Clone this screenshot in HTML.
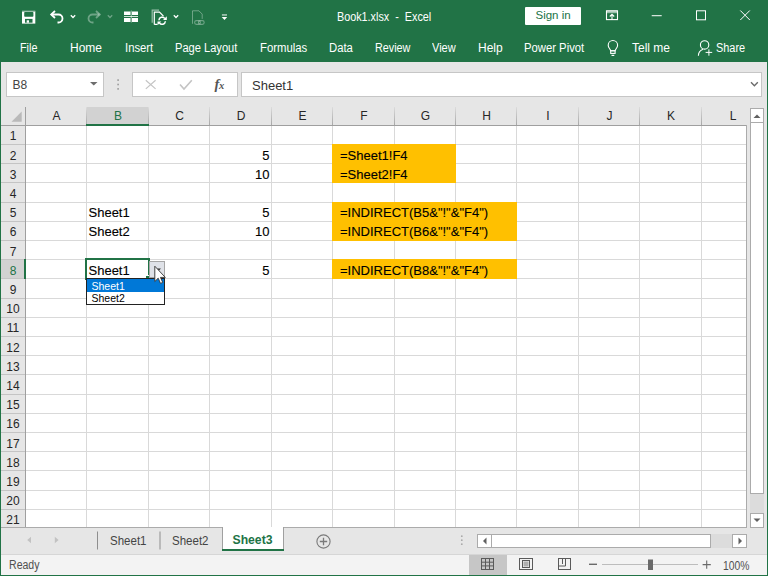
<!DOCTYPE html>
<html><head><meta charset="utf-8">
<style>
*{margin:0;padding:0;box-sizing:border-box}
html,body{width:768px;height:576px;overflow:hidden;background:#e6e6e6;font-family:"Liberation Sans",sans-serif}
body{position:relative}
.a{position:absolute}
.t{position:absolute;white-space:nowrap;line-height:1}
.w{color:#fff;font-size:12px}
svg{position:absolute;overflow:visible}
</style></head><body>
<!-- title/ribbon green -->
<div class="a" style="left:0;top:0;width:768px;height:62px;background:#217346"></div>

<!-- QAT icons -->
<svg style="left:0;top:0" width="240" height="32" viewBox="0 0 240 32">
  <!-- save -->
  <rect x="22" y="10.8" width="13.3" height="12.8" fill="#fff"/>
  <rect x="22" y="10.8" width="13.3" height="1.2" fill="#217346" fill-opacity=".45"/>
  <rect x="24.2" y="12" width="9.2" height="4.75" rx=".8" fill="#217346"/>
  <rect x="25" y="18.9" width="7.5" height="3.8" fill="#217346"/>
  <rect x="26.7" y="20.3" width="2.3" height="2.4" fill="#fff"/>
  <!-- undo -->
  <path d="M51.5 14.5h7a4 4 0 0 1 0 8h-1" fill="none" stroke="#fff" stroke-width="1.8"/>
  <path d="M55 11l-3.8 3.5 3.8 3.5" fill="none" stroke="#fff" stroke-width="1.8"/>
  <path d="M70.8 15.3l2.2 2.2 2.2-2.2" fill="none" stroke="#fff" stroke-width="1.3"/>
  <!-- redo dim -->
  <path d="M99.5 14.5h-7a4 4 0 0 0 0 8h1" fill="none" stroke="#fff" stroke-opacity=".35" stroke-width="1.8"/>
  <path d="M96 11l3.8 3.5-3.8 3.5" fill="none" stroke="#fff" stroke-opacity=".35" stroke-width="1.8"/>
  <path d="M107.8 15.3l2.2 2.2 2.2-2.2" fill="none" stroke="#fff" stroke-opacity=".35" stroke-width="1.3"/>
  <!-- grid -->
  <rect x="124" y="11.5" width="6.5" height="3.5" fill="#fff"/>
  <rect x="132" y="11.5" width="6" height="3.5" fill="#fff"/>
  <rect x="124" y="18" width="6.5" height="4" fill="#fff"/>
  <rect x="132" y="18" width="6" height="4" fill="#fff"/>
  <rect x="124" y="16" width="14" height="1" fill="#fff" fill-opacity=".8"/>
  <rect x="130.8" y="10.5" width="1" height="12" fill="#fff" fill-opacity=".5"/>
  <!-- doc refresh -->
  <path d="M152.2 22.8V10.1h6.8" fill="none" stroke="#fff" stroke-opacity=".55" stroke-width="1.2"/>
  <path d="M154.3 24.4V12.2h5.2l3.6 3.6v.8M154.3 24.4h3" fill="none" stroke="#fff" stroke-width="1.2"/>
  <path d="M158.9 20.3a3.4 3.4 0 0 1 6-1.9" fill="none" stroke="#fff" stroke-width="1.5"/>
  <path d="M165.4 21.2a3.4 3.4 0 0 1-6 1.9" fill="none" stroke="#fff" stroke-width="1.5"/>
  <path d="M166.8 16.2v3.8h-3.8z" fill="#fff"/>
  <path d="M157.5 25.3v-3.8h3.8z" fill="#fff"/>
  <path d="M173.8 15.3l2.2 2.2 2.2-2.2" fill="none" stroke="#fff" stroke-width="1.3"/>
  <!-- dim doc link -->
  <path d="M192.5 23.8V10.8h6.4l3.3 3.3v4.8" fill="none" stroke="#fff" stroke-opacity=".35" stroke-width="1"/>
  <rect x="194.6" y="20.6" width="5.8" height="3.8" rx="1.9" fill="none" stroke="#fff" stroke-opacity=".35" stroke-width="1.1"/>
  <rect x="198.4" y="20.6" width="5.8" height="3.8" rx="1.9" fill="none" stroke="#fff" stroke-opacity=".35" stroke-width="1.1"/>
  <!-- customize -->
  <rect x="221.9" y="14.3" width="5.1" height="1.3" fill="#fff" fill-opacity=".75"/>
  <path d="M221.7 17h5.5l-2.75 3.1z" fill="#fff"/>
</svg>

<div class="t w" style="left:337px;top:11px;transform:scaleX(0.9);transform-origin:0 0">Book1.xlsx&nbsp; -&nbsp; Excel</div>

<!-- sign in -->
<div class="a" style="left:525px;top:7px;width:56px;height:18px;background:#fff;border-radius:1px"></div>
<div class="t" style="left:535.5px;top:10px;font-size:11.5px;color:#217346">Sign in</div>

<!-- window controls -->
<svg style="left:0;top:0" width="768" height="32" viewBox="0 0 768 32">
  <rect x="606.5" y="10.8" width="11" height="8.8" fill="none" stroke="#fff" stroke-width="1.1"/>
  <rect x="606.5" y="10.8" width="11" height="2.4" fill="#fff" fill-opacity=".55"/>
  <path d="M612 19.5v-5M609.8 16.5l2.2-2.3 2.2 2.3" fill="none" stroke="#fff" stroke-width="1.1"/>
  <rect x="651.7" y="15.2" width="10" height="1" fill="#fff"/>
  <rect x="696.5" y="10.8" width="9" height="9" fill="none" stroke="#fff" stroke-width="1"/>
  <path d="M740.3 10.5l9.5 9.5M749.8 10.5l-9.5 9.5" stroke="#fff" stroke-width="1"/>
</svg>

<!-- ribbon tabs -->
<div class="t w" style="left:20px;top:42px;transform:scaleX(0.9);transform-origin:0 0">File</div>
<div class="t w" style="left:70px;top:42px">Home</div>
<div class="t w" style="left:124.5px;top:42px;transform:scaleX(0.94);transform-origin:0 0">Insert</div>
<div class="t w" style="left:175px;top:42px;transform:scaleX(0.925);transform-origin:0 0">Page Layout</div>
<div class="t w" style="left:260px;top:42px;transform:scaleX(0.945);transform-origin:0 0">Formulas</div>
<div class="t w" style="left:329px;top:42px;transform:scaleX(0.94);transform-origin:0 0">Data</div>
<div class="t w" style="left:375px;top:42px;transform:scaleX(0.9);transform-origin:0 0">Review</div>
<div class="t w" style="left:431.5px;top:42px;transform:scaleX(0.92);transform-origin:0 0">View</div>
<div class="t w" style="left:478px;top:42px">Help</div>
<div class="t w" style="left:524px;top:42px;transform:scaleX(0.94);transform-origin:0 0">Power Pivot</div>
<div class="t w" style="left:632px;top:42px">Tell me</div>
<div class="t w" style="left:716px;top:42px;transform:scaleX(0.91);transform-origin:0 0">Share</div>
<svg style="left:0;top:32px" width="768" height="30" viewBox="0 32 768 30">
  <path d="M610.7 50.8C610.2 48.6 608.2 47.8 608.2 45.2A4.7 4.7 0 0 1 617.6 45.2C617.6 47.8 615.6 48.6 615.1 50.8Z" fill="none" stroke="#fff" stroke-width="1.1"/>
  <rect x="610.7" y="50.8" width="4.4" height="2.6" fill="none" stroke="#fff" stroke-width="1.1"/>
  <path d="M611.5 55.4h2.8" stroke="#fff" stroke-width="1.2"/>
  <circle cx="704.6" cy="44.9" r="4.2" fill="none" stroke="#fff" stroke-width="1.1"/>
  <path d="M698.4 55.8a7 7 0 0 1 4.6-6.6" fill="none" stroke="#fff" stroke-width="1.1"/>
  <path d="M708.9 49.3v6.4M705.6 52.4h6.6" stroke="#fff" stroke-width="1"/>
</svg>

<!-- formula bar -->
<div class="a" style="left:6px;top:72px;width:98px;height:25px;background:#fff;border:1px solid #c6c6c6"></div>
<div class="t" style="left:12.5px;top:79px;font-size:12px;color:#444">B8</div>
<div class="a" style="left:132px;top:72px;width:106px;height:25px;background:#fff;border:1px solid #c6c6c6"></div>
<svg style="left:0;top:62px" width="768" height="45" viewBox="0 62 768 45">
  <path d="M90 82h7.5l-3.75 3.6z" fill="#6d6d6d"/>
  <rect x="117.3" y="79.3" width="1.6" height="1.6" fill="#9a9a9a"/>
  <rect x="117.3" y="83.7" width="1.6" height="1.6" fill="#9a9a9a"/>
  <rect x="117.3" y="88.1" width="1.6" height="1.6" fill="#9a9a9a"/>
  <path d="M145.8 80.3l9.8 8.6M155.6 80.3l-9.8 8.6" stroke="#c4c4c4" stroke-width="1.2"/>
  <path d="M180 84.5l4 4.5 7.8-8.8" fill="none" stroke="#c4c4c4" stroke-width="1.6"/>
</svg>
<div class="t" style="left:214.5px;top:76.5px;font-family:'Liberation Serif',serif;font-style:italic;font-weight:bold;font-size:14.5px;color:#555">f<span style="font-size:10.5px;position:relative;left:-.3px">x</span></div>
<div class="a" style="left:241px;top:72px;width:521px;height:25px;background:#fff;border:1px solid #c6c6c6"></div>
<div class="t" style="left:252px;top:78.5px;font-size:13px;color:#333">Sheet1</div>
<svg style="left:0;top:62px" width="768" height="45" viewBox="0 62 768 45">
  <path d="M751 82.3l3.4 3.4 3.4-3.4" fill="none" stroke="#6a6a6a" stroke-width="1.4"/>
</svg>
<!-- headers -->
<div class="a" style="left:1px;top:107px;width:745px;height:18px;background:#e6e6e6"></div>
<svg style="left:0;top:100px" width="30" height="30" viewBox="0 100 30 30"><path d="M21.7 111.5v10.2h-10.2z" fill="#b9b9b9"/></svg>
<div class="a" style="left:87px;top:107px;width:61px;height:17px;background:#d2d2d2"></div>
<div class="a" style="left:86px;top:124px;width:63px;height:2px;background:#217346"></div>
<div class="a" style="left:1px;top:125px;width:24px;height:403px;background:#e6e6e6"></div>
<div class="a" style="left:1px;top:260px;width:23px;height:18px;background:#d2d2d2"></div>
<div class="a" style="left:26px;top:126px;width:720px;height:401px;background:#fff"></div>
<div class="a" style="left:86px;top:126px;width:1px;height:401px;background:#d9d9d9"></div>
<div class="a" style="left:86px;top:107px;width:1px;height:18px;background:linear-gradient(#dcdcdc,#c6c6c6 40%,#a8a8a8)"></div>
<div class="a" style="left:148px;top:126px;width:1px;height:401px;background:#d9d9d9"></div>
<div class="a" style="left:148px;top:107px;width:1px;height:18px;background:linear-gradient(#dcdcdc,#c6c6c6 40%,#a8a8a8)"></div>
<div class="a" style="left:209px;top:126px;width:1px;height:401px;background:#d9d9d9"></div>
<div class="a" style="left:209px;top:107px;width:1px;height:18px;background:linear-gradient(#dcdcdc,#c6c6c6 40%,#a8a8a8)"></div>
<div class="a" style="left:271px;top:126px;width:1px;height:401px;background:#d9d9d9"></div>
<div class="a" style="left:271px;top:107px;width:1px;height:18px;background:linear-gradient(#dcdcdc,#c6c6c6 40%,#a8a8a8)"></div>
<div class="a" style="left:332px;top:126px;width:1px;height:401px;background:#d9d9d9"></div>
<div class="a" style="left:332px;top:107px;width:1px;height:18px;background:linear-gradient(#dcdcdc,#c6c6c6 40%,#a8a8a8)"></div>
<div class="a" style="left:394px;top:126px;width:1px;height:401px;background:#d9d9d9"></div>
<div class="a" style="left:394px;top:107px;width:1px;height:18px;background:linear-gradient(#dcdcdc,#c6c6c6 40%,#a8a8a8)"></div>
<div class="a" style="left:455px;top:126px;width:1px;height:401px;background:#d9d9d9"></div>
<div class="a" style="left:455px;top:107px;width:1px;height:18px;background:linear-gradient(#dcdcdc,#c6c6c6 40%,#a8a8a8)"></div>
<div class="a" style="left:516px;top:126px;width:1px;height:401px;background:#d9d9d9"></div>
<div class="a" style="left:516px;top:107px;width:1px;height:18px;background:linear-gradient(#dcdcdc,#c6c6c6 40%,#a8a8a8)"></div>
<div class="a" style="left:578px;top:126px;width:1px;height:401px;background:#d9d9d9"></div>
<div class="a" style="left:578px;top:107px;width:1px;height:18px;background:linear-gradient(#dcdcdc,#c6c6c6 40%,#a8a8a8)"></div>
<div class="a" style="left:639px;top:126px;width:1px;height:401px;background:#d9d9d9"></div>
<div class="a" style="left:639px;top:107px;width:1px;height:18px;background:linear-gradient(#dcdcdc,#c6c6c6 40%,#a8a8a8)"></div>
<div class="a" style="left:701px;top:126px;width:1px;height:401px;background:#d9d9d9"></div>
<div class="a" style="left:701px;top:107px;width:1px;height:18px;background:linear-gradient(#dcdcdc,#c6c6c6 40%,#a8a8a8)"></div>
<div class="a" style="left:26px;top:144px;width:720px;height:1px;background:#d9d9d9"></div>
<div class="a" style="left:1px;top:144px;width:24px;height:1px;background:#c4c4c4"></div>
<div class="a" style="left:26px;top:163px;width:720px;height:1px;background:#d9d9d9"></div>
<div class="a" style="left:1px;top:163px;width:24px;height:1px;background:#c4c4c4"></div>
<div class="a" style="left:26px;top:182px;width:720px;height:1px;background:#d9d9d9"></div>
<div class="a" style="left:1px;top:182px;width:24px;height:1px;background:#c4c4c4"></div>
<div class="a" style="left:26px;top:202px;width:720px;height:1px;background:#d9d9d9"></div>
<div class="a" style="left:1px;top:202px;width:24px;height:1px;background:#c4c4c4"></div>
<div class="a" style="left:26px;top:221px;width:720px;height:1px;background:#d9d9d9"></div>
<div class="a" style="left:1px;top:221px;width:24px;height:1px;background:#c4c4c4"></div>
<div class="a" style="left:26px;top:240px;width:720px;height:1px;background:#d9d9d9"></div>
<div class="a" style="left:1px;top:240px;width:24px;height:1px;background:#c4c4c4"></div>
<div class="a" style="left:26px;top:259px;width:720px;height:1px;background:#d9d9d9"></div>
<div class="a" style="left:1px;top:259px;width:24px;height:1px;background:#c4c4c4"></div>
<div class="a" style="left:26px;top:278px;width:720px;height:1px;background:#d9d9d9"></div>
<div class="a" style="left:1px;top:278px;width:24px;height:1px;background:#c4c4c4"></div>
<div class="a" style="left:26px;top:298px;width:720px;height:1px;background:#d9d9d9"></div>
<div class="a" style="left:1px;top:298px;width:24px;height:1px;background:#c4c4c4"></div>
<div class="a" style="left:26px;top:317px;width:720px;height:1px;background:#d9d9d9"></div>
<div class="a" style="left:1px;top:317px;width:24px;height:1px;background:#c4c4c4"></div>
<div class="a" style="left:26px;top:336px;width:720px;height:1px;background:#d9d9d9"></div>
<div class="a" style="left:1px;top:336px;width:24px;height:1px;background:#c4c4c4"></div>
<div class="a" style="left:26px;top:355px;width:720px;height:1px;background:#d9d9d9"></div>
<div class="a" style="left:1px;top:355px;width:24px;height:1px;background:#c4c4c4"></div>
<div class="a" style="left:26px;top:374px;width:720px;height:1px;background:#d9d9d9"></div>
<div class="a" style="left:1px;top:374px;width:24px;height:1px;background:#c4c4c4"></div>
<div class="a" style="left:26px;top:394px;width:720px;height:1px;background:#d9d9d9"></div>
<div class="a" style="left:1px;top:394px;width:24px;height:1px;background:#c4c4c4"></div>
<div class="a" style="left:26px;top:413px;width:720px;height:1px;background:#d9d9d9"></div>
<div class="a" style="left:1px;top:413px;width:24px;height:1px;background:#c4c4c4"></div>
<div class="a" style="left:26px;top:432px;width:720px;height:1px;background:#d9d9d9"></div>
<div class="a" style="left:1px;top:432px;width:24px;height:1px;background:#c4c4c4"></div>
<div class="a" style="left:26px;top:451px;width:720px;height:1px;background:#d9d9d9"></div>
<div class="a" style="left:1px;top:451px;width:24px;height:1px;background:#c4c4c4"></div>
<div class="a" style="left:26px;top:470px;width:720px;height:1px;background:#d9d9d9"></div>
<div class="a" style="left:1px;top:470px;width:24px;height:1px;background:#c4c4c4"></div>
<div class="a" style="left:26px;top:490px;width:720px;height:1px;background:#d9d9d9"></div>
<div class="a" style="left:1px;top:490px;width:24px;height:1px;background:#c4c4c4"></div>
<div class="a" style="left:26px;top:509px;width:720px;height:1px;background:#d9d9d9"></div>
<div class="a" style="left:1px;top:509px;width:24px;height:1px;background:#c4c4c4"></div>
<div class="a" style="left:25px;top:107px;width:1px;height:421px;background:#9f9f9f"></div>
<div class="a" style="left:1px;top:125px;width:745px;height:1px;background:#9f9f9f"></div>
<div class="a" style="left:86px;top:124px;width:63px;height:2px;background:#217346"></div>
<div class="a" style="left:24px;top:259px;width:2px;height:20px;background:#217346"></div>
<div class="a" style="left:746px;top:125px;width:1px;height:403px;background:#ababab"></div>
<div class="a" style="left:1px;top:527px;width:746px;height:1px;background:#ababab"></div>
<div class="t" style="left:26px;top:110px;width:61px;text-align:center;font-size:12px;color:#262626">A</div>
<div class="t" style="left:87px;top:110px;width:62px;text-align:center;font-size:12px;color:#217346">B</div>
<div class="t" style="left:149px;top:110px;width:61px;text-align:center;font-size:12px;color:#262626">C</div>
<div class="t" style="left:210px;top:110px;width:62px;text-align:center;font-size:12px;color:#262626">D</div>
<div class="t" style="left:272px;top:110px;width:61px;text-align:center;font-size:12px;color:#262626">E</div>
<div class="t" style="left:333px;top:110px;width:62px;text-align:center;font-size:12px;color:#262626">F</div>
<div class="t" style="left:395px;top:110px;width:61px;text-align:center;font-size:12px;color:#262626">G</div>
<div class="t" style="left:456px;top:110px;width:61px;text-align:center;font-size:12px;color:#262626">H</div>
<div class="t" style="left:517px;top:110px;width:62px;text-align:center;font-size:12px;color:#262626">I</div>
<div class="t" style="left:579px;top:110px;width:61px;text-align:center;font-size:12px;color:#262626">J</div>
<div class="t" style="left:640px;top:110px;width:62px;text-align:center;font-size:12px;color:#262626">K</div>
<div class="t" style="left:702px;top:110px;width:62px;text-align:center;font-size:12px;color:#262626">L</div>
<div class="t" style="left:1px;top:130px;width:24px;text-align:center;font-size:12px;color:#262626">1</div>
<div class="t" style="left:1px;top:150px;width:24px;text-align:center;font-size:12px;color:#262626">2</div>
<div class="t" style="left:1px;top:169px;width:24px;text-align:center;font-size:12px;color:#262626">3</div>
<div class="t" style="left:1px;top:188px;width:24px;text-align:center;font-size:12px;color:#262626">4</div>
<div class="t" style="left:1px;top:207px;width:24px;text-align:center;font-size:12px;color:#262626">5</div>
<div class="t" style="left:1px;top:226px;width:24px;text-align:center;font-size:12px;color:#262626">6</div>
<div class="t" style="left:1px;top:246px;width:24px;text-align:center;font-size:12px;color:#262626">7</div>
<div class="t" style="left:1px;top:265px;width:24px;text-align:center;font-size:12px;color:#217346">8</div>
<div class="t" style="left:1px;top:284px;width:24px;text-align:center;font-size:12px;color:#262626">9</div>
<div class="t" style="left:1px;top:303px;width:24px;text-align:center;font-size:12px;color:#262626">10</div>
<div class="t" style="left:1px;top:322px;width:24px;text-align:center;font-size:12px;color:#262626">11</div>
<div class="t" style="left:1px;top:342px;width:24px;text-align:center;font-size:12px;color:#262626">12</div>
<div class="t" style="left:1px;top:361px;width:24px;text-align:center;font-size:12px;color:#262626">13</div>
<div class="t" style="left:1px;top:380px;width:24px;text-align:center;font-size:12px;color:#262626">14</div>
<div class="t" style="left:1px;top:399px;width:24px;text-align:center;font-size:12px;color:#262626">15</div>
<div class="t" style="left:1px;top:418px;width:24px;text-align:center;font-size:12px;color:#262626">16</div>
<div class="t" style="left:1px;top:438px;width:24px;text-align:center;font-size:12px;color:#262626">17</div>
<div class="t" style="left:1px;top:457px;width:24px;text-align:center;font-size:12px;color:#262626">18</div>
<div class="t" style="left:1px;top:476px;width:24px;text-align:center;font-size:12px;color:#262626">19</div>
<div class="t" style="left:1px;top:495px;width:24px;text-align:center;font-size:12px;color:#262626">20</div>
<div class="t" style="left:1px;top:514px;width:24px;text-align:center;font-size:12px;color:#262626">21</div>
<!-- cell fills -->
<div class="a" style="left:332px;top:144px;width:124px;height:39px;background:#ffc000"></div>
<div class="a" style="left:332px;top:202px;width:185px;height:39px;background:#ffc000"></div>
<div class="a" style="left:332px;top:259px;width:185px;height:20px;background:#ffc000"></div>
<!-- cell text -->
<div class="t" style="left:189.5px;width:80px;text-align:right;top:148.5px;font-size:13px;color:#000;-webkit-text-stroke:.12px #000">5</div>
<div class="t" style="left:189.5px;width:80px;text-align:right;top:167.5px;font-size:13px;color:#000;-webkit-text-stroke:.12px #000">10</div>
<div class="t" style="left:189.5px;width:80px;text-align:right;top:205.5px;font-size:13px;color:#000;-webkit-text-stroke:.12px #000">5</div>
<div class="t" style="left:189.5px;width:80px;text-align:right;top:224.5px;font-size:13px;color:#000;-webkit-text-stroke:.12px #000">10</div>
<div class="t" style="left:189.5px;width:80px;text-align:right;top:263.5px;font-size:13px;color:#000;-webkit-text-stroke:.12px #000">5</div>
<div class="t" style="left:340px;top:148.5px;font-size:13px;color:#000;-webkit-text-stroke:.12px #000">=Sheet1!F4</div>
<div class="t" style="left:340px;top:167.5px;font-size:13px;color:#000;-webkit-text-stroke:.12px #000">=Sheet2!F4</div>
<div class="t" style="left:340px;top:205.5px;font-size:13px;color:#000;-webkit-text-stroke:.12px #000">=INDIRECT(B5&amp;"!"&amp;"F4")</div>
<div class="t" style="left:340px;top:224.5px;font-size:13px;color:#000;-webkit-text-stroke:.12px #000">=INDIRECT(B6&amp;"!"&amp;"F4")</div>
<div class="t" style="left:340px;top:263.5px;font-size:13px;color:#000;-webkit-text-stroke:.12px #000">=INDIRECT(B8&amp;"!"&amp;"F4")</div>
<div class="t" style="left:88.5px;top:205.5px;font-size:13px;color:#000;-webkit-text-stroke:.12px #000">Sheet1</div>
<div class="t" style="left:88.5px;top:224.5px;font-size:13px;color:#000;-webkit-text-stroke:.12px #000">Sheet2</div>
<!-- selection -->
<div class="a" style="left:85px;top:258px;width:65px;height:22px;border:2px solid #217346"></div>
<div class="a" style="left:87px;top:260px;width:61px;height:18px;background:#fff"></div>
<div class="t" style="left:88.5px;top:263.5px;font-size:13px;color:#000;-webkit-text-stroke:.12px #000">Sheet1</div>
<div class="a" style="left:145px;top:275px;width:5px;height:5px;background:#217346;border:1px solid #fff"></div>
<div class="a" style="left:149px;top:261px;width:16px;height:17px;background:#dfe2e8;border:1px solid #a6a6a6"></div>
<div class="a" style="left:86px;top:278px;width:79px;height:27px;background:#fff;border:1px solid #222"></div>
<div class="a" style="left:87px;top:279px;width:77px;height:13px;background:#0078d7"></div>
<div class="t" style="left:91.5px;top:280.5px;font-size:10.5px;color:#fff">Sheet1</div>
<div class="t" style="left:91.5px;top:293px;font-size:10.5px;color:#000">Sheet2</div>
<svg style="left:0;top:250px" width="200" height="50" viewBox="0 250 200 50">
  <path d="M157 268.5h4l-2 2z" fill="#333"/>
  <path d="M154.8 266.2v15.3l3.4-3.3 2.3 5.2 2.2-1-2.2-5h4.8z" fill="#fff" stroke="#333" stroke-width=".9" stroke-linejoin="round"/>
</svg>
<!-- sheet tabs -->
<div class="a" style="left:1px;top:528px;width:766px;height:26px;background:#e6e6e6"></div>
<svg style="left:0;top:528px" width="768" height="26" viewBox="0 528 768 26">
  <path d="M31 536.7v6.6l-3.8-3.3z" fill="#c2c2c2"/>
  <path d="M54.8 536.7v6.6l3.8-3.3z" fill="#c2c2c2"/>
  <rect x="97" y="531.5" width="1" height="18" fill="#8e8e8e"/>
  <rect x="159.5" y="531.5" width="1" height="18" fill="#8e8e8e"/>
  <circle cx="323.5" cy="541.5" r="6.6" fill="none" stroke="#7a7a7a" stroke-width="1.1"/>
  <path d="M323.5 537.8v7.4M319.8 541.5h7.4" stroke="#7a7a7a" stroke-width="1.3"/>
  <circle cx="461.8" cy="536.2" r=".9" fill="#a8a8a8"/>
  <circle cx="461.8" cy="540.2" r=".9" fill="#a8a8a8"/>
  <circle cx="461.8" cy="544.2" r=".9" fill="#a8a8a8"/>
</svg>
<div class="a" style="left:222px;top:527px;width:62px;height:24px;background:#fff;border-left:1px solid #a0a0a0;border-right:1px solid #a0a0a0"></div>
<div class="a" style="left:222px;top:549px;width:62px;height:2px;background:#217346"></div>
<div class="t" style="left:109.5px;top:534.5px;font-size:12px;color:#444;transform:scaleX(.96);transform-origin:0 0">Sheet1</div>
<div class="t" style="left:171.5px;top:534.5px;font-size:12px;color:#444;transform:scaleX(.96);transform-origin:0 0">Sheet2</div>
<div class="t" style="left:232.5px;top:533.5px;font-size:12.2px;font-weight:bold;color:#217346">Sheet3</div>
<!-- h scrollbar -->
<div class="a" style="left:477px;top:534px;width:270px;height:14px;background:#dcdcdc"></div>
<div class="a" style="left:477px;top:534px;width:15px;height:14px;background:#fff;border:1px solid #ababab"></div>
<div class="a" style="left:491px;top:534px;width:220px;height:14px;background:#fff;border:1px solid #ababab"></div>
<div class="a" style="left:732px;top:534px;width:15px;height:14px;background:#fff;border:1px solid #ababab"></div>
<svg style="left:0;top:528px" width="768" height="26" viewBox="0 528 768 26">
  <path d="M486.5 537.5v7l-3.5-3.5z" fill="#606060"/>
  <path d="M738.5 537.5v7l3.5-3.5z" fill="#606060"/>
</svg>
<!-- v scrollbar -->
<div class="a" style="left:750px;top:108px;width:14px;height:420px;background:#dcdcdc"></div>
<div class="a" style="left:750px;top:108px;width:14px;height:15px;background:#fff;border:1px solid #ababab"></div>
<div class="a" style="left:750px;top:122px;width:14px;height:372px;background:#fff;border:1px solid #ababab"></div>
<div class="a" style="left:750px;top:513px;width:14px;height:15px;background:#fff;border:1px solid #ababab"></div>
<svg style="left:740px;top:100px" width="28" height="440" viewBox="740 100 28 440">
  <path d="M753.5 118h7l-3.5-3.5z" fill="#606060"/>
  <path d="M753.5 518.5h7l-3.5 3.5z" fill="#606060"/>
</svg>
<!-- status bar -->
<div class="a" style="left:1px;top:554px;width:766px;height:21px;background:#f3f3f3;border-top:1px solid #d6d6d6"></div>
<div class="t" style="left:9px;top:558.5px;font-size:12px;color:#505050;transform:scaleX(.88);transform-origin:0 0">Ready</div>
<div class="a" style="left:469px;top:555px;width:38px;height:20px;background:#c6c6c6"></div>
<svg style="left:0;top:554px" width="768" height="22" viewBox="0 554 768 22">
  <g fill="none" stroke="#5a5a5a" stroke-width="1">
    <rect x="481.5" y="558.5" width="12" height="11"/>
    <path d="M485.5 558.5v11M489.5 558.5v11M481.5 562.2h12M481.5 565.9h12"/>
    <rect x="519.5" y="558.5" width="13" height="11"/>
    <rect x="522.5" y="560.5" width="7" height="7"/>
    <rect x="558.5" y="558.5" width="12" height="11"/>
    <path d="M562.5 558.5v5.5M565.5 558.5v7.5h-7"/>
  </g>
  <rect x="523.5" y="561.5" width="5" height="5" fill="#b0b0b0"/>
  <rect x="589" y="563.6" width="8" height="1.4" fill="#6a6a6a"/>
  <rect x="602" y="564" width="96" height="1" fill="#bdbdbd"/>
  <rect x="648" y="559.5" width="5" height="10.5" fill="#6a6a6a"/>
  <path d="M706.7 560.5v8.2M702.6 564.6h8.2" stroke="#6a6a6a" stroke-width="1.1"/>
</svg>
<div class="t" style="left:723px;top:559.5px;font-size:12px;color:#505050;transform:scaleX(.86);transform-origin:0 0">100%</div>
<!-- window borders -->
<div class="a" style="left:0;top:0;width:1px;height:576px;background:#217346"></div>
<div class="a" style="left:767px;top:0;width:1px;height:576px;background:#217346"></div>
<div class="a" style="left:0;top:575px;width:768px;height:1px;background:#217346"></div>
</body></html>
